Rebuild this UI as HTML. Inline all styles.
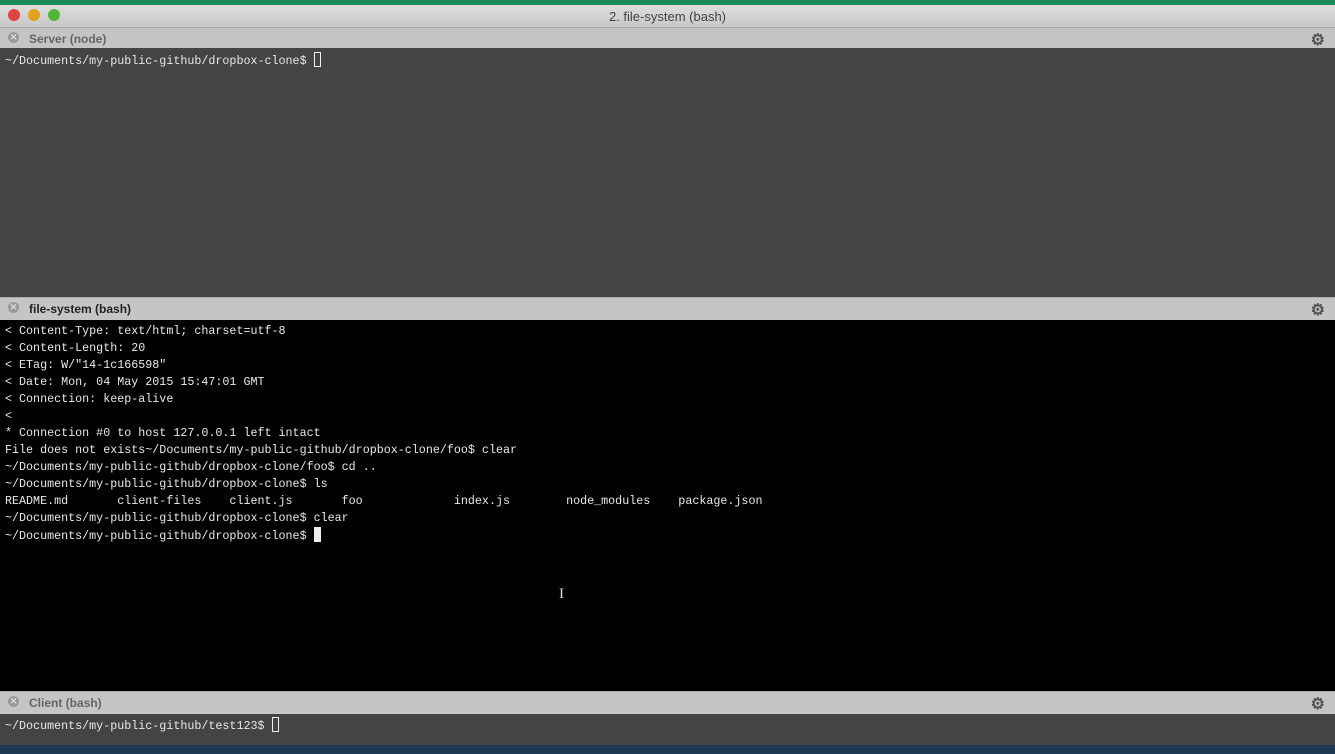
<!DOCTYPE html><html><head><style>
body{margin:0;width:1335px;height:754px;overflow:hidden;background:#1d3a52;position:relative;font-family:"Liberation Sans",sans-serif}
.a{position:absolute;left:0;width:1335px}
.tab{background:#c5c5c5;font-size:12px;color:#666;font-weight:bold;border-top:1px solid #aaa}
.tab span{position:absolute;left:29px;top:4px}
.x{position:absolute;left:8px;top:4px;width:11px;height:11px;border-radius:50%;background:#9a9a9a;color:#ddd;font-size:9px;line-height:11px;text-align:center}
.g{position:absolute;right:10px;top:2px;font-size:16px;color:#555}
pre{margin:0;font-family:"Liberation Mono",monospace;font-size:11.7px;line-height:17px;color:#e8e8e8;position:absolute;left:5px}
.c{display:inline-block;width:7px;height:15px;border:1px solid #eee;box-sizing:border-box;vertical-align:-3px}
.d{position:absolute;top:10px;width:12px;height:12px;border-radius:50%}
</style></head><body>
<div class="a" style="top:0;height:5px;background:#1f8a5a"></div>
<div class="a" style="top:5px;height:22px;background:linear-gradient(#dedede,#c8c8c8)">
<div class="d" style="left:8px;top:4px;background:#e0443e"></div><div class="d" style="left:28px;top:4px;background:#e0a11e"></div><div class="d" style="left:48px;top:4px;background:#4fb83a"></div>
<div style="position:absolute;left:0;width:1335px;text-align:center;top:4px;font-size:13px;color:#444">2. file-system (bash)</div></div>
<div class="a tab" style="top:27px;height:21px"><div class="x">✕</div><span>Server (node)</span><div class="g">⚙</div></div>
<div class="a" style="top:48px;height:249px;background:#444"><pre style="top:4px">~/Documents/my-public-github/dropbox-clone$ <span class="c"></span></pre></div>
<div class="a tab" style="top:297px;height:22px"><div class="x">✕</div><span style="color:#222">file-system (bash)</span><div class="g">⚙</div></div>
<div class="a" style="top:320px;height:371px;background:#000"><pre style="top:3px">&lt; Content-Type: text/html; charset=utf-8
&lt; Content-Length: 20
&lt; ETag: W/"14-1c166598"
&lt; Date: Mon, 04 May 2015 15:47:01 GMT
&lt; Connection: keep-alive
&lt;
* Connection #0 to host 127.0.0.1 left intact
File does not exists~/Documents/my-public-github/dropbox-clone/foo$ clear
~/Documents/my-public-github/dropbox-clone/foo$ cd ..
~/Documents/my-public-github/dropbox-clone$ ls
README.md       client-files    client.js       foo             index.js        node_modules    package.json
~/Documents/my-public-github/dropbox-clone$ clear
~/Documents/my-public-github/dropbox-clone$ <span class="c" style="background:#eee"></span></pre>
<div style="position:absolute;left:559px;top:266px;color:#ddd;font-size:15px;font-family:'Liberation Serif',serif">I</div></div>
<div class="a tab" style="top:691px;height:23px"><div class="x">✕</div><span>Client (bash)</span><div class="g">⚙</div></div>
<div class="a" style="top:714px;height:31px;background:#444"><pre style="top:3px">~/Documents/my-public-github/test123$ <span class="c"></span></pre></div>
</body></html>
